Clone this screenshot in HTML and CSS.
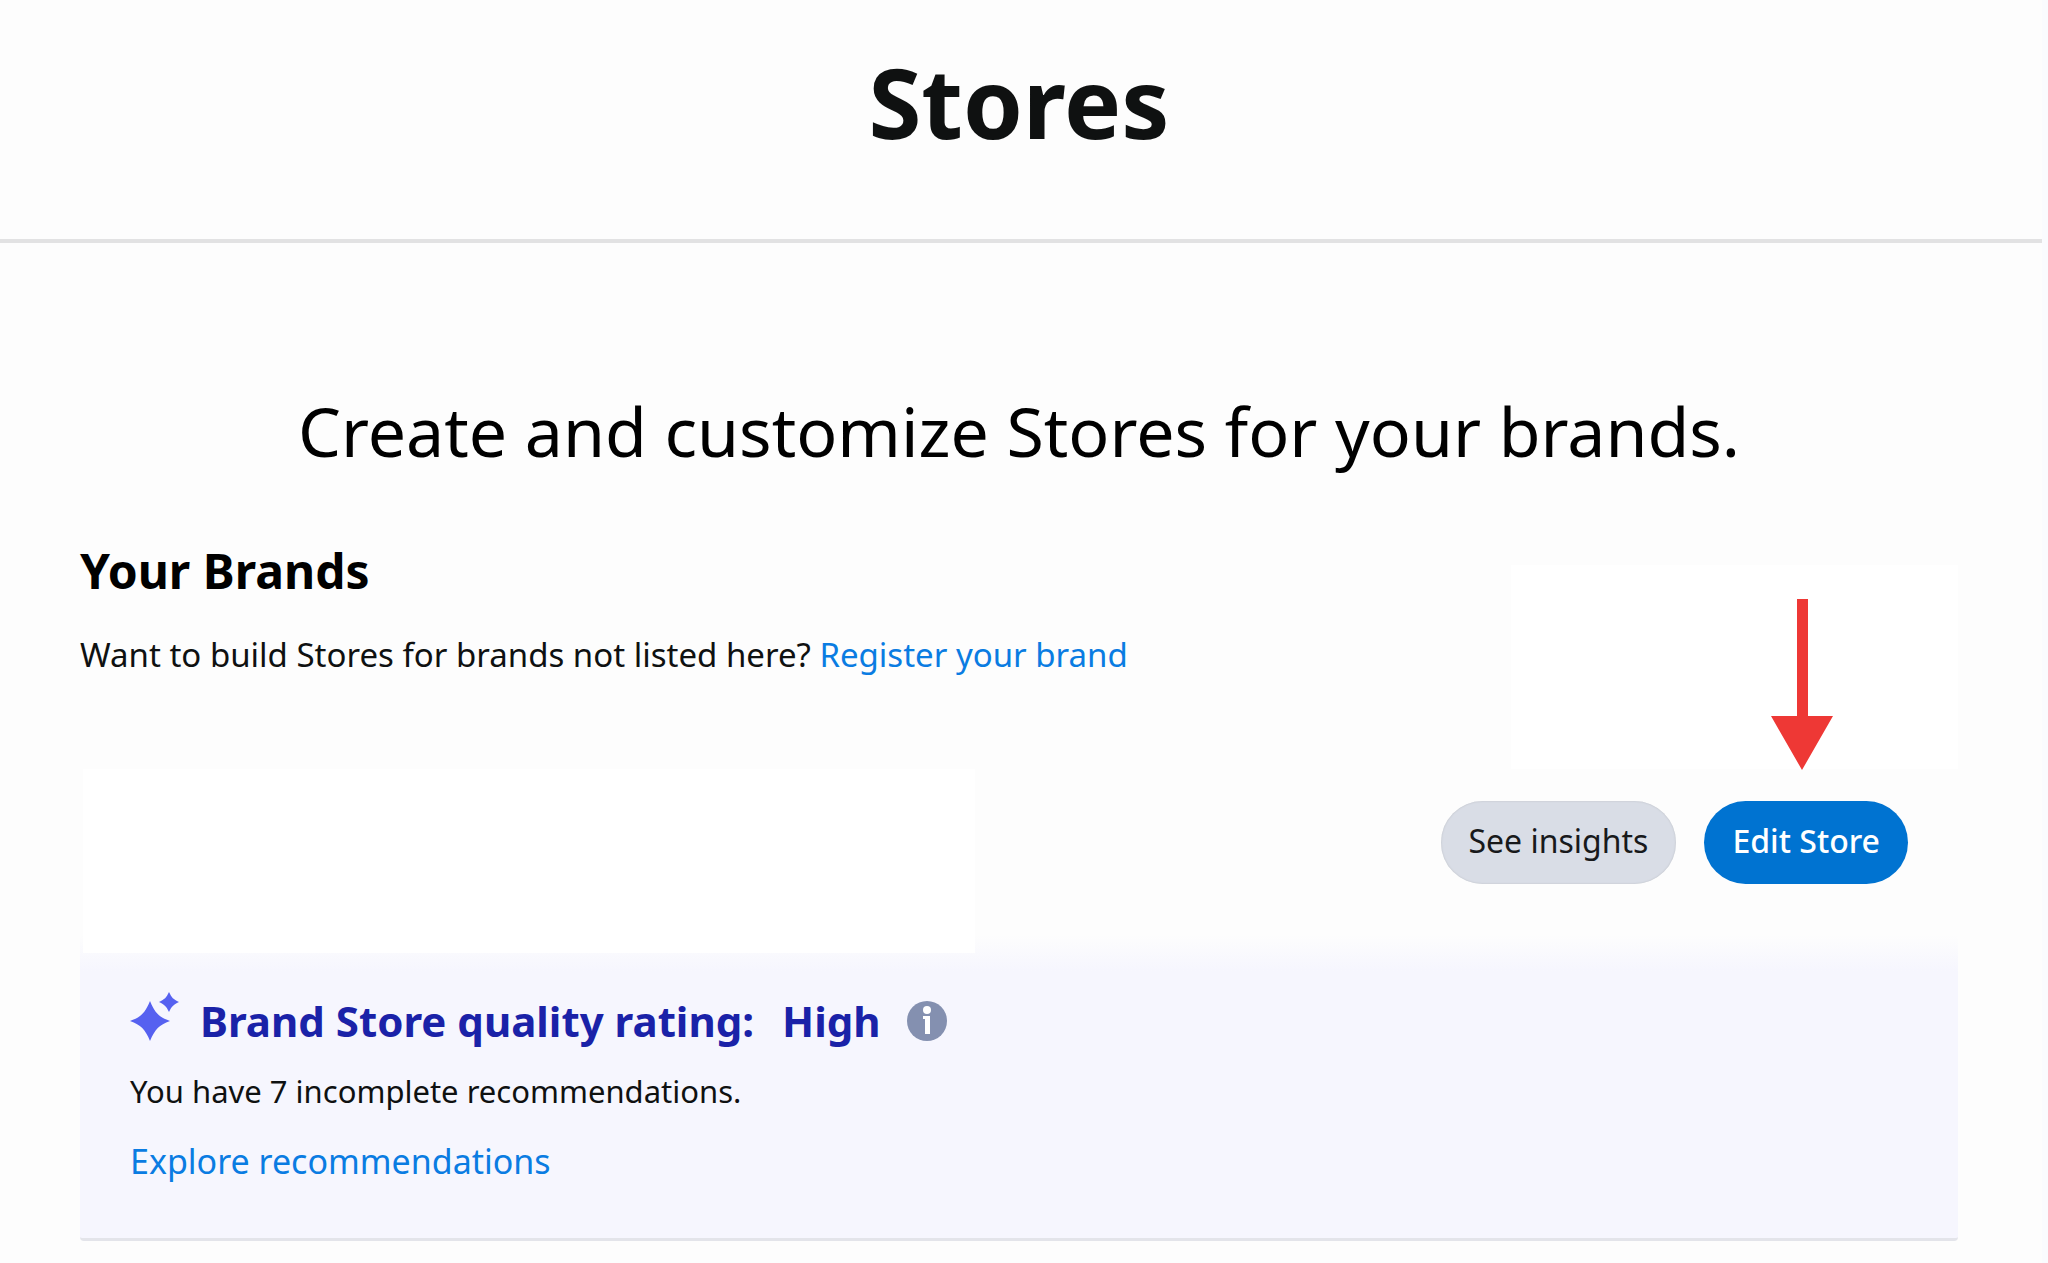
FILE: index.html
```html
<!DOCTYPE html>
<html lang="en">
<head>
<meta charset="utf-8">
<meta name="viewport" content="width=device-width, initial-scale=1">
<title>Stores</title>
<link rel="stylesheet" href="styles.css">
</head>
<body>
<div class="page">
  <header class="page-header">
    <h1 class="page-title">Stores</h1>
  </header>
  <main class="content">
    <p class="tagline">Create and customize Stores for your brands.</p>
    <div class="intro">
      <section class="brands">
        <h2 class="brands-title">Your Brands</h2>
        <p class="brands-text">Want to build Stores for brands not listed here? <a class="link" href="#register">Register your brand</a></p>
      </section>
      <div class="notice">
        <svg class="arrow" viewBox="0 0 62 171" aria-hidden="true"><path d="M26 0h11v117h25L31 171 0 117h26z" fill="#ee3835"/></svg>
      </div>
    </div>
    <div class="brand-row">
      <div class="brand-name"></div>
      <div class="actions">
        <button class="button button-secondary" type="button">See insights</button>
        <button class="button button-primary" type="button">Edit Store</button>
      </div>
    </div>
    <section class="quality">
      <div class="quality-head">
        <svg class="sparkle" viewBox="0 0 50 50" aria-hidden="true"><path d="M20 9C25 21 29 25 40 29 29 33 25 37 20 49 15 37 11 33 0 29 11 25 15 21 20 9zM39 0C42 6 43 7 49 10 43 13 42 14 39 20 36 14 35 13 29 10 35 7 36 6 39 0z" fill="#5661f0"/></svg>
        <h3 class="quality-title"><span>Brand Store quality rating:</span> <span>High</span></h3>
        <svg class="info" viewBox="0 0 40 40" role="img" aria-label="Information"><circle cx="20" cy="20" r="20" fill="#8490b0"/><circle cx="20" cy="9" r="4" fill="#fff"/><path d="M16 15h7v18h-5V18h-2z" fill="#fff"/></svg>
      </div>
      <p class="quality-text">You have 7 incomplete recommendations.</p>
      <a class="link quality-link" href="#recommendations">Explore recommendations</a>
    </section>
  </main>
</div>
</body>
</html>
```
FILE: styles.css
```css
* { box-sizing: border-box; }

body {
  margin: 0;
  padding-right: 6px;
  background: #fafbfe;
  color: #0f1111;
  font-family: "Noto Sans", "Open Sans", sans-serif;
  font-size: 32px;
  line-height: 44px;
}

h1, h2, h3, p { margin: 0; }

.page {
  min-height: 100vh;
  background: #fdfdfd;
}

.page-header {
  padding: 38px 4px 73px 0;
  border-bottom: 4px solid #e2e2e3;
  text-align: center;
}

.page-title {
  font-size: 96px;
  line-height: 128px;
}

.content { padding: 140px 84px 20px 80px; }

.tagline {
  color: #000;
  font-size: 68px;
  line-height: 96px;
  text-align: center;
}

.intro {
  display: flex;
  justify-content: space-between;
  margin-top: 86px;
}

.brands-title {
  margin-top: -26px;
  color: #000;
  font-size: 48px;
  line-height: 64px;
}

.brands-text {
  margin-top: 30px;
  font-size: 33px;
}

.link {
  color: #0a7ce2;
  text-decoration: none;
}

.notice {
  display: flex;
  width: 447px;
  height: 204px;
  padding: 34px 125px 0 0;
  justify-content: flex-end;
  background: #fff;
}

.arrow {
  width: 62px;
  height: 171px;
}

.brand-row {
  display: flex;
  justify-content: space-between;
  padding-right: 50px;
}

.brand-name {
  z-index: 1;
  width: 892px;
  height: 184px;
  margin-left: 3px;
  background: #fff;
}

.actions {
  display: flex;
  gap: 28px;
  align-items: flex-start;
  padding-top: 32px;
}

.button {
  height: 83px;
  padding: 0 28px 4px;
  border: 0;
  border-radius: 42px;
  font: inherit;
}

.button-secondary {
  background: #d9dde6;
  color: #18191b;
  box-shadow: inset 0 0 2px #b9bcc2;
}

.button-primary {
  background: #0073d1;
  color: #fff;
  font-weight: 500;
}

.quality {
  margin-top: -18px;
  padding: 54px 50px 54px;
  border-bottom: 3px solid #e3e4ea;
  border-radius: 4px;
  background: linear-gradient(#fdfdfd, #f6f6fe 36px);
}

.quality-head {
  display: flex;
  align-items: center;
}

.sparkle {
  width: 50px;
  height: 50px;
  margin-bottom: 8px;
}

.quality-title {
  display: flex;
  gap: 28px;
  margin: 0 26px 0 20px;
  color: #1a22a8;
  font-size: 42px;
  line-height: 64px;
}

.info {
  width: 40px;
  height: 40px;
}

.quality-text {
  margin-top: 16px;
  font-size: 31px;
}

.quality-link {
  display: inline-block;
  margin-top: 26px;
  font-size: 34px;
}
```
